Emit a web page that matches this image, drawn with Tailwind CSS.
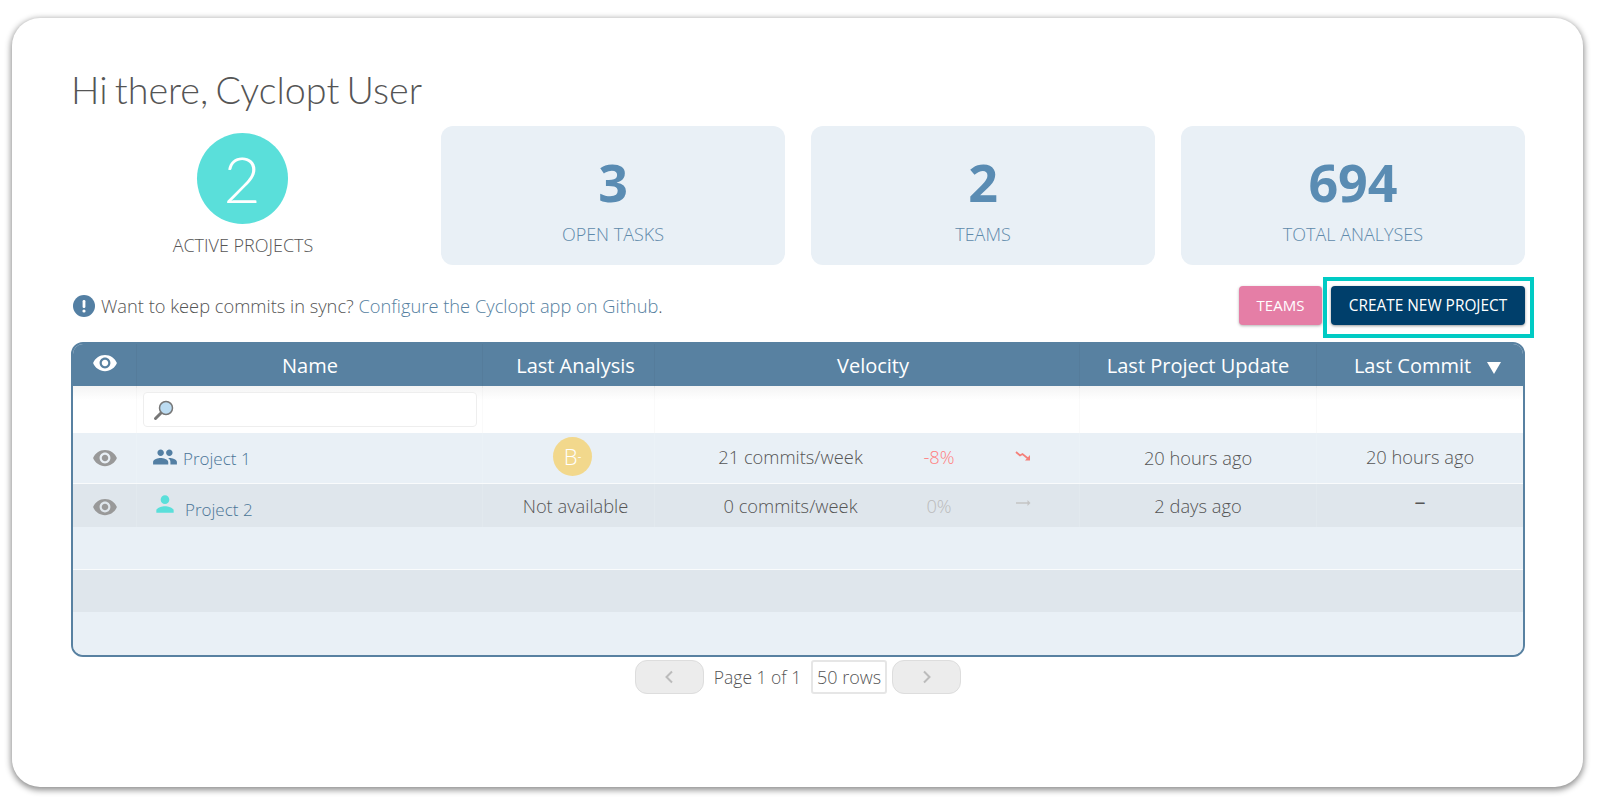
<!DOCTYPE html>
<html lang="en">
<head>
    <meta charset="UTF-8">
    <meta name="viewport" content="width=device-width, initial-scale=1.0">
    <title>Cyclopt Dashboard</title>
    <script src="https://cdn.jsdelivr.net/npm/@tailwindcss/browser@4"></script>
</head>
<body class="bg-white h-[802px] overflow-hidden pl-[12px] pt-[18px] font-['Open_Sans',sans-serif] font-light text-[#555]">
    <main class="w-[1571px] h-[769px] bg-white rounded-[28px] shadow-[0_2px_6px_1px_rgba(0,0,0,0.45)] pl-[59px] pr-[58px] pt-[50px]">
        <h1 class="font-['Lato',sans-serif] font-light text-[37.7px] [word-spacing:-3px] leading-[44px] text-[#555] h-[58px]">Hi there, Cyclopt User</h1>

        <!-- stats -->
        <section class="grid grid-cols-4 gap-[26px] h-[139px]">
            <div class="flex flex-col items-center">
                <div class="w-[91px] h-[91px] mt-[7px] -translate-x-[1px] rounded-full bg-[#5adfda] text-white font-['Lato',sans-serif] font-light text-[64px] leading-[91px] text-center">2</div>
                <div class="text-[18px] leading-[24px] mt-[9px] text-[#555]">ACTIVE PROJECTS</div>
            </div>
            <div class="rounded-xl bg-[#e9f0f6] flex flex-col items-center pt-[26px]">
                <div class="text-[52px] font-bold leading-[60px] text-[#5a8cb3]">3</div>
                <div class="text-[18px] leading-[24px] mt-[10px] text-[#5f8aab]">OPEN TASKS</div>
            </div>
            <div class="rounded-xl bg-[#e9f0f6] flex flex-col items-center pt-[26px]">
                <div class="text-[52px] font-bold leading-[60px] text-[#5a8cb3]">2</div>
                <div class="text-[18px] leading-[24px] mt-[10px] text-[#5f8aab]">TEAMS</div>
            </div>
            <div class="rounded-xl bg-[#e9f0f6] flex flex-col items-center pt-[26px]">
                <div class="text-[52px] font-bold leading-[60px] text-[#5a8cb3]">694</div>
                <div class="text-[18px] leading-[24px] mt-[10px] text-[#5f8aab]">TOTAL ANALYSES</div>
            </div>
        </section>

        <!-- notice + actions -->
        <section class="flex items-center justify-between h-[39px] mt-[21px]">
            <div class="flex items-center gap-[6px] text-[18.3px] pl-[2px]">
                <svg class="w-[22px] h-[22px]" viewBox="0 0 22 22"><circle cx="11" cy="11" r="11" fill="#537fa3"/><rect x="9.6" y="5" width="2.8" height="8" rx="1.2" fill="#fff"/><circle cx="11" cy="16" r="1.6" fill="#fff"/></svg>
                <p>Want to keep commits in sync? <a class="text-[#567f9f]">Configure the Cyclopt app on Github</a>.</p>
            </div>
            <div class="flex gap-[9px]">
                <button class="w-[83px] h-[39px] rounded bg-[#e57ea6] text-white text-[15px] font-medium shadow-[0_1px_3px_rgba(0,0,0,0.3)]">TEAMS</button>
                <div class="relative">
                    <button class="w-[194px] h-[39px] rounded bg-[#003f6b] text-white text-[15.4px] font-medium shadow-[0_1px_3px_rgba(0,0,0,0.4)]">CREATE NEW PROJECT</button>
                    <div class="absolute -left-[8px] -top-[9px] w-[211px] h-[61px] border-4 border-[#00cbc4]"></div>
                </div>
            </div>
        </section>

        <!-- projects table -->
        <section class="mt-[17px] w-[1454px] h-[315px] border-2 border-[#5881a1] rounded-xl overflow-hidden bg-[#e9f0f6]">
            <div class="grid grid-cols-[64px_346px_172px_425px_237px_1fr] h-[43px] -mt-[1px] bg-[#5881a1] text-white text-[20px] font-normal items-center text-center">
                <div class="h-full flex justify-center pt-[7px] border-r border-black/[0.03]">
                    <svg class="w-[26px] h-[26px]" viewBox="0 0 24 24" fill="#fff"><path d="M12 4.5C7 4.5 2.73 7.61 1 12c1.73 4.39 6 7.5 11 7.5s9.27-3.11 11-7.5c-1.73-4.39-6-7.5-11-7.5zM12 17c-2.76 0-5-2.24-5-5s2.24-5 5-5 5 2.24 5 5-2.24 5-5 5zm0-8c-1.66 0-3 1.34-3 3s1.34 3 3 3 3-1.34 3-3-1.34-3-3-3z"/></svg>
                </div>
                <div class="h-full leading-[45px] pl-[1px] border-r border-black/[0.03]">Name</div>
                <div class="h-full leading-[45px] pl-[14px] whitespace-nowrap border-r border-black/[0.03]">Last Analysis</div>
                <div class="h-full leading-[45px] pl-[12px] border-r border-black/[0.03]">Velocity</div>
                <div class="h-full leading-[45px] border-r border-black/[0.03]">Last Project Update</div>
                <div class="h-full flex items-center justify-center gap-[16px] pl-[15px]">
                    <span>Last Commit</span>
                    <svg class="w-[14px] h-[12px] mt-[5px]" viewBox="0 0 14 12" fill="#fff"><path d="M0 0h14L7 12z"/></svg>
                </div>
            </div>

            <!-- filter row -->
            <div class="grid grid-cols-[64px_346px_172px_425px_237px_1fr] h-[47px] bg-gradient-to-b from-[#f4f4f4] to-white to-30%">
                <div class="border-r border-black/[0.02]"></div>
                <div class="border-r border-black/[0.02] pl-[6px] pt-[6px]">
                    <div class="w-[334px] h-[35px] bg-white border border-[#eee] rounded flex items-center pl-[9px]">
                        <svg class="w-[22px] h-[22px]" viewBox="0 0 22 22">
                            <path d="M8 14 2.5 19.500" stroke="#777" stroke-width="3" stroke-linecap="round"/>
                            <circle cx="13" cy="9" r="6.500" fill="#bcdcf2" stroke="#777" stroke-width="1.500"/>
                        </svg>
                    </div>
                </div>
                <div class="border-r border-black/[0.02]"></div>
                <div class="border-r border-black/[0.02]"></div>
                <div class="border-r border-black/[0.02]"></div>
                <div></div>
            </div>

            <!-- project 1 -->
            <div class="grid grid-cols-[64px_346px_172px_425px_237px_1fr] h-[51px] bg-[#e9f0f6] border-b border-white/70 text-[18.3px] items-center text-center">
                <div class="h-full flex items-center justify-center border-r border-white/10">
                    <svg class="w-[26px] h-[26px]" viewBox="0 0 24 24" fill="#999"><path d="M12 4.5C7 4.5 2.73 7.61 1 12c1.73 4.39 6 7.5 11 7.5s9.27-3.11 11-7.5c-1.73-4.39-6-7.5-11-7.5zM12 17c-2.76 0-5-2.24-5-5s2.24-5 5-5 5 2.24 5 5-2.24 5-5 5zm0-8c-1.66 0-3 1.34-3 3s1.34 3 3 3 3-1.34 3-3-1.34-3-3-3z"/></svg>
                </div>
                <div class="h-full flex items-center gap-[5px] pl-[15px] border-r border-white/10 text-[17px] text-[#4a7596]">
                    <svg class="w-[26px] h-[26px] -mt-[3px]" viewBox="0 0 24 24" fill="#537fa3"><path d="M16 11c1.660 0 2.990-1.340 2.990-3S17.660 5 16 5c-1.660 0-3 1.340-3 3s1.340 3 3 3zm-8 0c1.660 0 2.990-1.340 2.990-3S9.660 5 8 5C6.340 5 5 6.340 5 8s1.340 3 3 3zm0 2c-2.330 0-7 1.170-7 3.500V19h14v-2.500c0-2.330-4.670-3.500-7-3.500zm8 0c-.29 0-.62.02-.97.05 1.160.84 1.970 1.970 1.970 3.450V19h6v-2.500c0-2.330-4.670-3.500-7-3.500z"/></svg>
                    <a class="mt-[2px]">Project 1</a>
                </div>
                <div class="h-full flex items-center justify-center pl-[8px] border-r border-white/10">
                    <div class="w-[39px] h-[39px] -mt-[3px] rounded-full bg-[#f2d88c] text-white text-[22px] leading-[39px]">B<sup class="text-[11px] font-normal">-</sup></div>
                </div>
                <div class="h-full grid grid-cols-[257px_54px_1fr] items-center pb-[2px] border-r border-white/10">
                    <div class="pl-[14px]">21 commits/week</div>
                    <div class="text-[#ff7f7f]">-8%</div>
                    <div class="flex justify-center -mt-[3px]">
                        <svg class="w-[16px] h-[10px]" viewBox="0 0 16 10" fill="none" stroke="#f4807a" stroke-width="1.800"><path d="M1 1 5 4.500 7.500 3 13 7.500"/><path d="M15 4v5.500H10" fill="#f4807a" stroke="none"/></svg>
                    </div>
                </div>
                <div class="h-full leading-[49px] border-r border-white/10">20 hours ago</div>
                <div class="pb-[2px]">20 hours ago</div>
            </div>

            <!-- project 2 -->
            <div class="grid grid-cols-[64px_346px_172px_425px_237px_1fr] h-[43px] bg-[#dfe6ec] text-[18.3px] items-center text-center">
                <div class="h-full flex items-center justify-center pt-[2px] border-r border-white/10">
                    <svg class="w-[26px] h-[26px]" viewBox="0 0 24 24" fill="#999"><path d="M12 4.5C7 4.5 2.73 7.61 1 12c1.73 4.39 6 7.5 11 7.5s9.27-3.11 11-7.5c-1.73-4.39-6-7.5-11-7.5zM12 17c-2.76 0-5-2.24-5-5s2.24-5 5-5 5 2.24 5 5-2.24 5-5 5zm0-8c-1.66 0-3 1.34-3 3s1.34 3 3 3 3-1.34 3-3-1.34-3-3-3z"/></svg>
                </div>
                <div class="h-full flex items-center gap-[7px] pl-[15px] border-r border-white/10 text-[17px] text-[#4a7596]">
                    <svg class="w-[26px] h-[26px] -mt-[4px]" viewBox="0 0 24 24" fill="#5adfda"><path d="M12 12c2.210 0 4-1.790 4-4s-1.790-4-4-4-4 1.790-4 4 1.790 4 4 4zm0 2c-2.670 0-8 1.340-8 4v2h16v-2c0-2.660-5.330-4-8-4z"/></svg>
                    <a class="mt-[8px]">Project 2</a>
                </div>
                <div class="h-full leading-[43px] pl-[14px] whitespace-nowrap border-r border-white/10">Not available</div>
                <div class="h-full grid grid-cols-[257px_54px_1fr] items-center border-r border-white/10">
                    <div class="pl-[14px]">0 commits/week</div>
                    <div class="text-[#bbb]">0%</div>
                    <div class="flex justify-center -mt-[5px]">
                        <svg class="w-[16px] h-[8px]" viewBox="0 0 16 8" fill="none" stroke="#c4c4c4" stroke-width="1.600"><path d="M1 4h12"/><path d="M12.500 1 15.500 4l-3 3z" fill="#c4c4c4" stroke="none"/></svg>
                    </div>
                </div>
                <div class="h-full leading-[43px] border-r border-white/10">2 days ago</div>
                <div class="-mt-[10px] text-[22px] font-normal">–</div>
            </div>

            <!-- empty rows -->
            <div class="h-[43px] bg-[#e9f0f6] border-b border-white/70"></div>
            <div class="h-[42px] bg-[#dfe6ec]"></div>
            <div class="h-[43px] bg-[#e9f0f6]"></div>
        </section>

        <!-- pagination -->
        <nav class="flex items-center justify-center gap-[5px] mt-[3px] text-[17.5px]">
            <button class="w-[69px] h-[34px] rounded-[12px] bg-[#ececec] border border-[#ddd] flex items-center justify-center">
                <svg class="w-[10px] h-[14px]" viewBox="0 0 10 14" fill="none" stroke="#bbb" stroke-width="2"><path d="M8 1.500 2.500 7 8 12.500"/></svg>
            </button>
            <span class="mx-[5px]">Page 1 of 1</span>
            <div class="w-[76px] h-[34px] bg-white border-2 border-[#e6e6e6] rounded-[3px] text-[18px] leading-[30px] text-center">50 rows</div>
            <button class="w-[69px] h-[34px] rounded-[12px] bg-[#ececec] border border-[#ddd] flex items-center justify-center">
                <svg class="w-[10px] h-[14px]" viewBox="0 0 10 14" fill="none" stroke="#bbb" stroke-width="2"><path d="M2 1.500 7.500 7 2 12.500"/></svg>
            </button>
        </nav>
    </main>
</body>
</html>
